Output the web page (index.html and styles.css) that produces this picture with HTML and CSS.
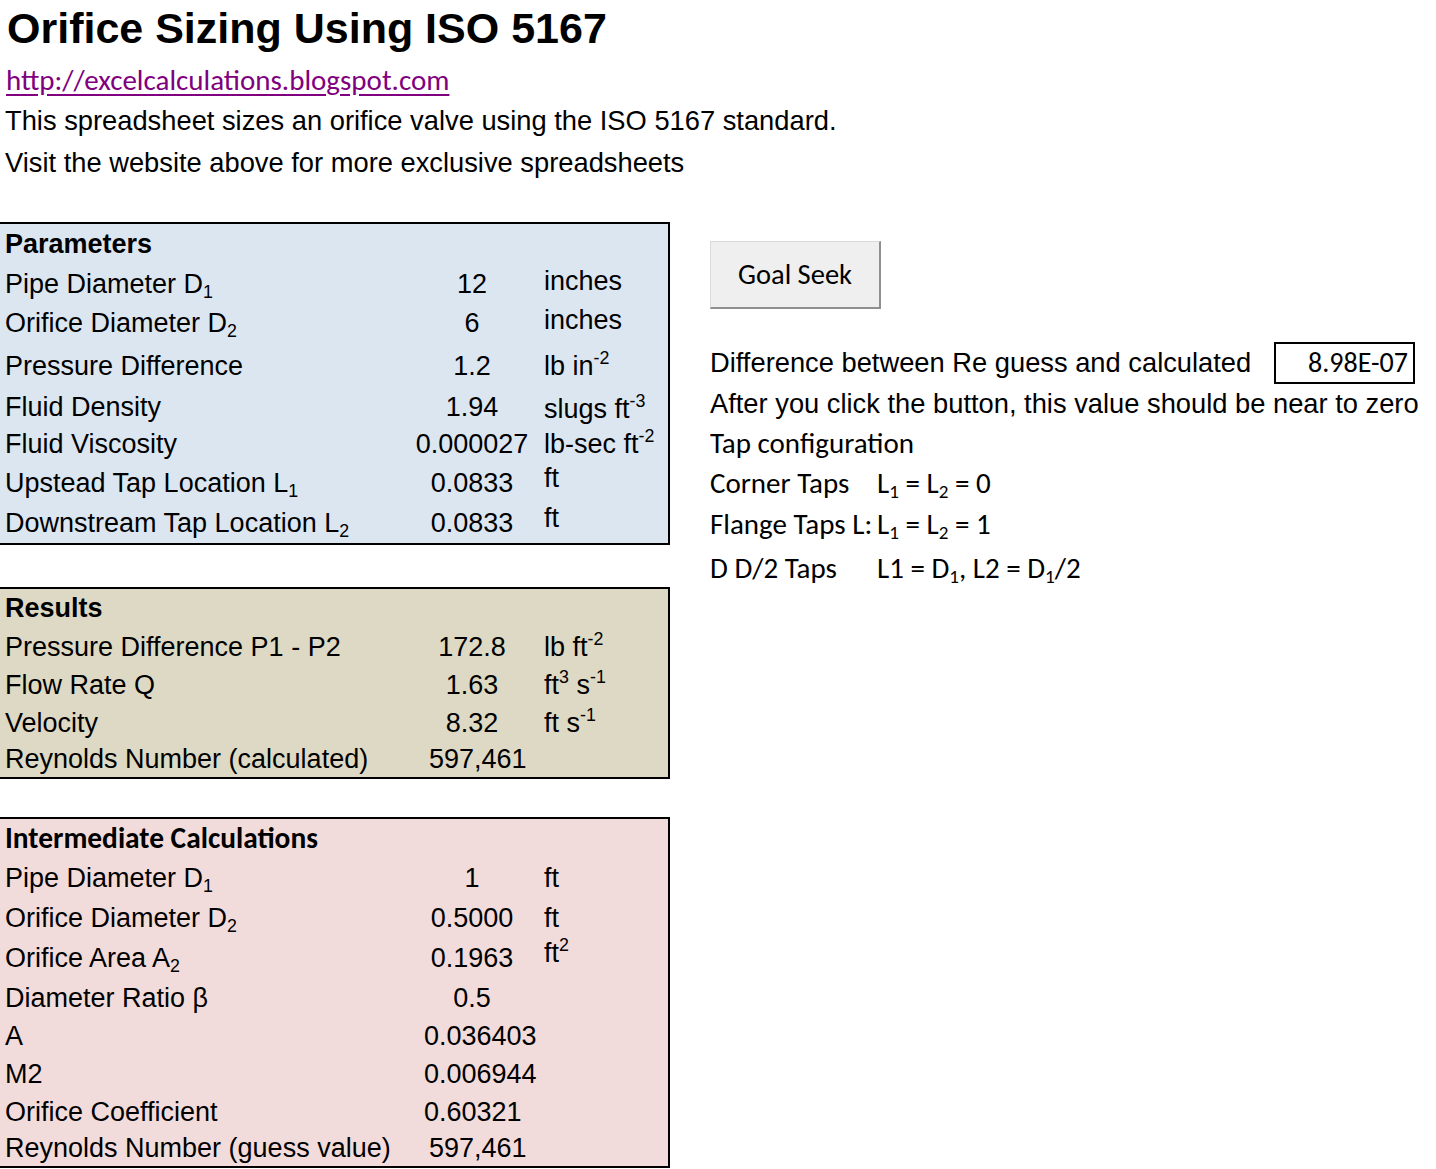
FILE: index.html
```html
<!DOCTYPE html>
<html>
<head>
<meta charset="utf-8">
<title>Orifice Sizing Using ISO 5167</title>
<link rel="stylesheet" href="styles.css">
</head>
<body>
<header class="intro">
  <h1 class="title">Orifice Sizing Using ISO 5167</h1>
  <div class="line url-line"><a class="url" href="#">http://excelcalculations.blogspot.com</a></div>
  <div class="line desc">This spreadsheet sizes an orifice valve using the ISO 5167 standard.</div>
  <div class="line desc">Visit the website above for more exclusive spreadsheets</div>
</header>

<main class="sheet">
  <section class="left">
    <div class="box params">
      <div class="row h40"><span class="head">Parameters</span></div>
      <div class="row h40"><span class="lbl">Pipe Diameter D<sub>1</sub></span><span class="val">12</span><span class="unit up">inches</span></div>
      <div class="row h39"><span class="lbl">Orifice Diameter D<sub>2</sub></span><span class="val">6</span><span class="unit up">inches</span></div>
      <div class="row h46"><span class="lbl">Pressure Difference</span><span class="val">1.2</span><span class="unit">lb in<sup>-2</sup></span></div>
      <div class="row h36"><span class="lbl">Fluid Density</span><span class="val">1.94</span><span class="unit dn">slugs ft<sup>-3</sup></span></div>
      <div class="row h39"><span class="lbl">Fluid Viscosity</span><span class="val">0.000027</span><span class="unit">lb-sec ft<sup>-2</sup></span></div>
      <div class="row h39"><span class="lbl">Upstead Tap Location L<sub>1</sub></span><span class="val">0.0833</span><span class="unit up2">ft</span></div>
      <div class="row h40"><span class="lbl">Downstream Tap Location L<sub>2</sub></span><span class="val">0.0833</span><span class="unit up2">ft</span></div>
    </div>

    <div class="box results">
      <div class="row h39"><span class="head">Results</span></div>
      <div class="row h38"><span class="lbl">Pressure Difference P1 - P2</span><span class="val">172.8</span><span class="unit">lb ft<sup>-2</sup></span></div>
      <div class="row h38"><span class="lbl">Flow Rate Q</span><span class="val">1.63</span><span class="unit">ft<sup>3</sup> s<sup>-1</sup></span></div>
      <div class="row h38"><span class="lbl">Velocity</span><span class="val">8.32</span><span class="unit">ft s<sup>-1</sup></span></div>
      <div class="row h35"><span class="lbl">Reynolds Number (calculated)</span><span class="val left19">597,461</span><span class="unit"></span></div>
    </div>

    <div class="box inter">
      <div class="row h39"><span class="head cal">Intermediate Calculations</span></div>
      <div class="row h40"><span class="lbl">Pipe Diameter D<sub>1</sub></span><span class="val">1</span><span class="unit">ft</span></div>
      <div class="row h40"><span class="lbl">Orifice Diameter D<sub>2</sub></span><span class="val">0.5000</span><span class="unit">ft</span></div>
      <div class="row h41"><span class="lbl">Orifice Area A<sub>2</sub></span><span class="val">0.1963</span><span class="unit up2">ft<sup>2</sup></span></div>
      <div class="row h38"><span class="lbl">Diameter Ratio β</span><span class="val">0.5</span><span class="unit"></span></div>
      <div class="row h38"><span class="lbl">A</span><span class="val left14">0.036403</span><span class="unit"></span></div>
      <div class="row h38"><span class="lbl">M2</span><span class="val left14">0.006944</span><span class="unit"></span></div>
      <div class="row h38"><span class="lbl">Orifice Coefficient</span><span class="val left14">0.60321</span><span class="unit"></span></div>
      <div class="row h35"><span class="lbl">Reynolds Number (guess value)</span><span class="val left19">597,461</span><span class="unit"></span></div>
    </div>
  </section>

  <aside class="right">
    <button class="goal" type="button">Goal Seek</button>
    <div class="rrow diff"><span class="rtext">Difference between Re guess and calculated</span><span class="diffbox">8.98E-07</span></div>
    <div class="rrow h38"><span class="rtext">After you click the button, this value should be near to zero</span></div>
    <div class="rrow h40"><span class="ctext">Tap configuration</span></div>
    <div class="rrow h40"><span class="ctext tapname">Corner Taps</span><span class="ctext">L<sub>1</sub> = L<sub>2</sub> = 0</span></div>
    <div class="rrow h42"><span class="ctext tapname">Flange Taps L:</span><span class="ctext">L<sub>1</sub> = L<sub>2</sub> = 1</span></div>
    <div class="rrow h46"><span class="ctext tapname">D D/2 Taps</span><span class="ctext">L1 = D<sub>1</sub>, L2 = D<sub>1</sub>/2</span></div>
  </aside>
</main>
</body>
</html>
```

FILE: styles.css
```css
html, body {
  margin: 0;
  padding: 0;
  background: #ffffff;
  color: #000000;
}

body {
  font-family: "Liberation Sans", Arial, sans-serif;
  font-size: 27px;
  width: 1436px;
  height: 1169px;
  overflow: hidden;
}

.intro {
  display: flex;
  flex-direction: column;
}

.title {
  margin: 0;
  height: 56px;
  display: flex;
  align-items: center;
  padding-left: 7px;
  font-size: 43px;
  font-weight: bold;
  line-height: 1;
}

.line {
  display: flex;
  align-items: center;
  line-height: 1;
}

.url-line {
  margin-top: 4px;
  height: 40px;
  padding-left: 6px;
}

.url {
  font-family: Carlito, Calibri, Lato, sans-serif;
  font-size: 29px;
  color: #800080;
  text-decoration: underline;
  text-underline-offset: 4px;
}

.desc {
  height: 42px;
  padding-left: 5px;
  font-size: 27.3px;
}

.sheet {
  margin-top: 38px;
  display: flex;
  align-items: flex-start;
}

.left {
  width: 670px;
  display: flex;
  flex-direction: column;
  gap: 42px;
}

.box {
  border: 2px solid #000;
  border-left: none;
  width: 668px;
}

.params { background: #dce6f1; }
.results { background: #ddd9c4; }
.inter { background: #f2dcdb; margin-top: -4px; }

.row {
  display: flex;
  align-items: center;
  line-height: 1;
  white-space: nowrap;
}

.h35 { height: 35px; }
.h36 { height: 36px; }
.h38 { height: 38px; }
.h39 { height: 39px; }
.h40 { height: 40px; }
.h41 { height: 41px; }
.h42 { height: 42px; }
.h46 { height: 46px; }

.head {
  padding-left: 5px;
  font-weight: bold;
  font-size: 27px;
}

.head.cal {
  font-family: Carlito, Calibri, Lato, sans-serif;
  font-size: 29.4px;
}

.lbl {
  width: 410px;
  padding-left: 5px;
  box-sizing: border-box;
}

.val {
  width: 124px;
  text-align: center;
}

.val.left14 { text-align: left; padding-left: 14px; box-sizing: border-box; }
.val.left19 { text-align: left; padding-left: 19px; box-sizing: border-box; }

.unit {
  padding-left: 10px;
  position: relative;
}

.unit.up { top: -3px; }
.unit.up2 { top: -5px; }
.unit.dn { top: 2px; }

sub, sup {
  font-size: 0.66em;
  line-height: 0;
}

sub { vertical-align: -0.28em; }
sup { vertical-align: 0.6em; }

.right {
  margin-left: 40px;
  width: 705px;
  display: flex;
  flex-direction: column;
  align-items: flex-start;
}

.goal {
  margin-top: 19px;
  width: 171px;
  height: 68px;
  background: #efefef;
  border-style: solid;
  border-width: 1px 2px 2px 1px;
  border-color: #dadada #8f8f8f #8f8f8f #dadada;
  font-family: Carlito, Calibri, Lato, sans-serif;
  font-size: 28.5px;
  color: #000;
  padding: 0;
  margin-bottom: 32px;
}

.rrow {
  display: flex;
  align-items: center;
  line-height: 1;
  white-space: nowrap;
  width: 705px;
}

.diff { height: 44px; }

.rtext { font-size: 27.3px; }

.diffbox {
  margin-left: auto;
  width: 132px;
  height: 38px;
  border: 2px solid #000;
  display: flex;
  align-items: center;
  justify-content: flex-end;
  padding-right: 5px;
  box-sizing: content-box;
  font-family: Carlito, Calibri, Lato, sans-serif;
  font-size: 28px;
}

.ctext {
  font-family: Carlito, Calibri, Lato, sans-serif;
  font-size: 29px;
}

.tapname {
  width: 167px;
}
```
